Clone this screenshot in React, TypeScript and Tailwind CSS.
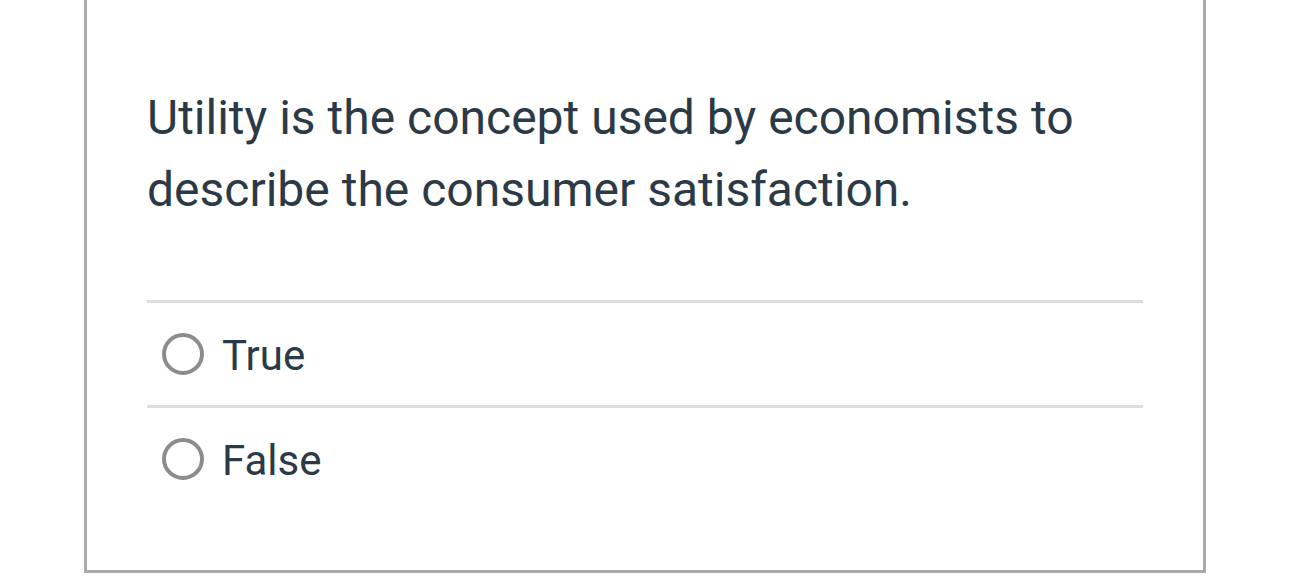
import React from 'react';

export default function App() {
  const options = ['True', 'False'];

  return (
    <div className="min-h-screen bg-white" style={{ fontFamily: 'Roboto, "Open Sans", sans-serif' }}>
      <div className="ml-[84px] w-[1122px] h-[573px] border-x-[3px] border-b-[3px] border-[#aaaaaa] px-[60px] pt-[82px]">
        <p className="text-[48px] leading-[72px] text-[#2b3a46]">
          Utility is the concept used by economists to describe the consumer satisfaction.
        </p>
        <div className="mt-[74px]">
          {options.map((opt) => (
            <label
              key={opt}
              className="flex items-center h-[105px] border-t-[3px] border-[#dddddd] cursor-pointer"
            >
              <span className="ml-[15px] w-[42px] h-[42px] rounded-full border-[4px] border-[#8c8c8e]" />
              <span className="ml-[18px] mt-[2px] text-[42px] text-[#2b3a46]">{opt}</span>
            </label>
          ))}
        </div>
      </div>
    </div>
  );
}
